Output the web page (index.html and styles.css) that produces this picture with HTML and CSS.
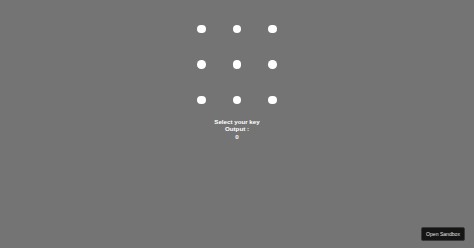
FILE: index.html
```html
<!DOCTYPE html>
<html>
<head>
<meta charset="utf-8">
<link rel="stylesheet" href="styles.css">
</head>
<body>
<div class="app">
  <div class="pad">
    <span class="dot"></span><span class="dot"></span><span class="dot"></span>
    <span class="dot"></span><span class="dot"></span><span class="dot"></span>
    <span class="dot"></span><span class="dot"></span><span class="dot"></span>
  </div>
  <div class="info">
    <div>Select your key</div>
    <div>Output :</div>
    <div>0</div>
  </div>
</div>
<a class="sandbox">Open Sandbox</a>
</body>
</html>
```
FILE: styles.css
```css
html, body {
  margin: 0;
  height: 100%;
  background: #747474;
  font-family: "Liberation Sans", Arial, sans-serif;
}
.app {
  display: flex;
  flex-direction: column;
  align-items: center;
  padding-top: 24.5px;
}
.pad {
  display: grid;
  grid-template-columns: repeat(3, 8.5px);
  grid-auto-rows: 8.5px;
  column-gap: 27px;
  row-gap: 27px;
}
.dot {
  display: block;
  width: 8.5px;
  height: 8.5px;
  border-radius: 50%;
  background: #ffffff;
}
.info {
  margin-top: 13.5px;
  color: #ffffff;
  font-weight: bold;
  font-size: 6.2px;
  line-height: 7.6px;
  text-align: center;
}
.sandbox {
  position: fixed;
  right: 9px;
  bottom: 7px;
  width: 44px;
  height: 14px;
  box-sizing: border-box;
  display: flex;
  align-items: center;
  justify-content: center;
  background: #151515;
  border: 1px solid #3a3a3a;
  border-radius: 2px;
  color: #e6e6e6;
  font-size: 5.1px;
}
```
